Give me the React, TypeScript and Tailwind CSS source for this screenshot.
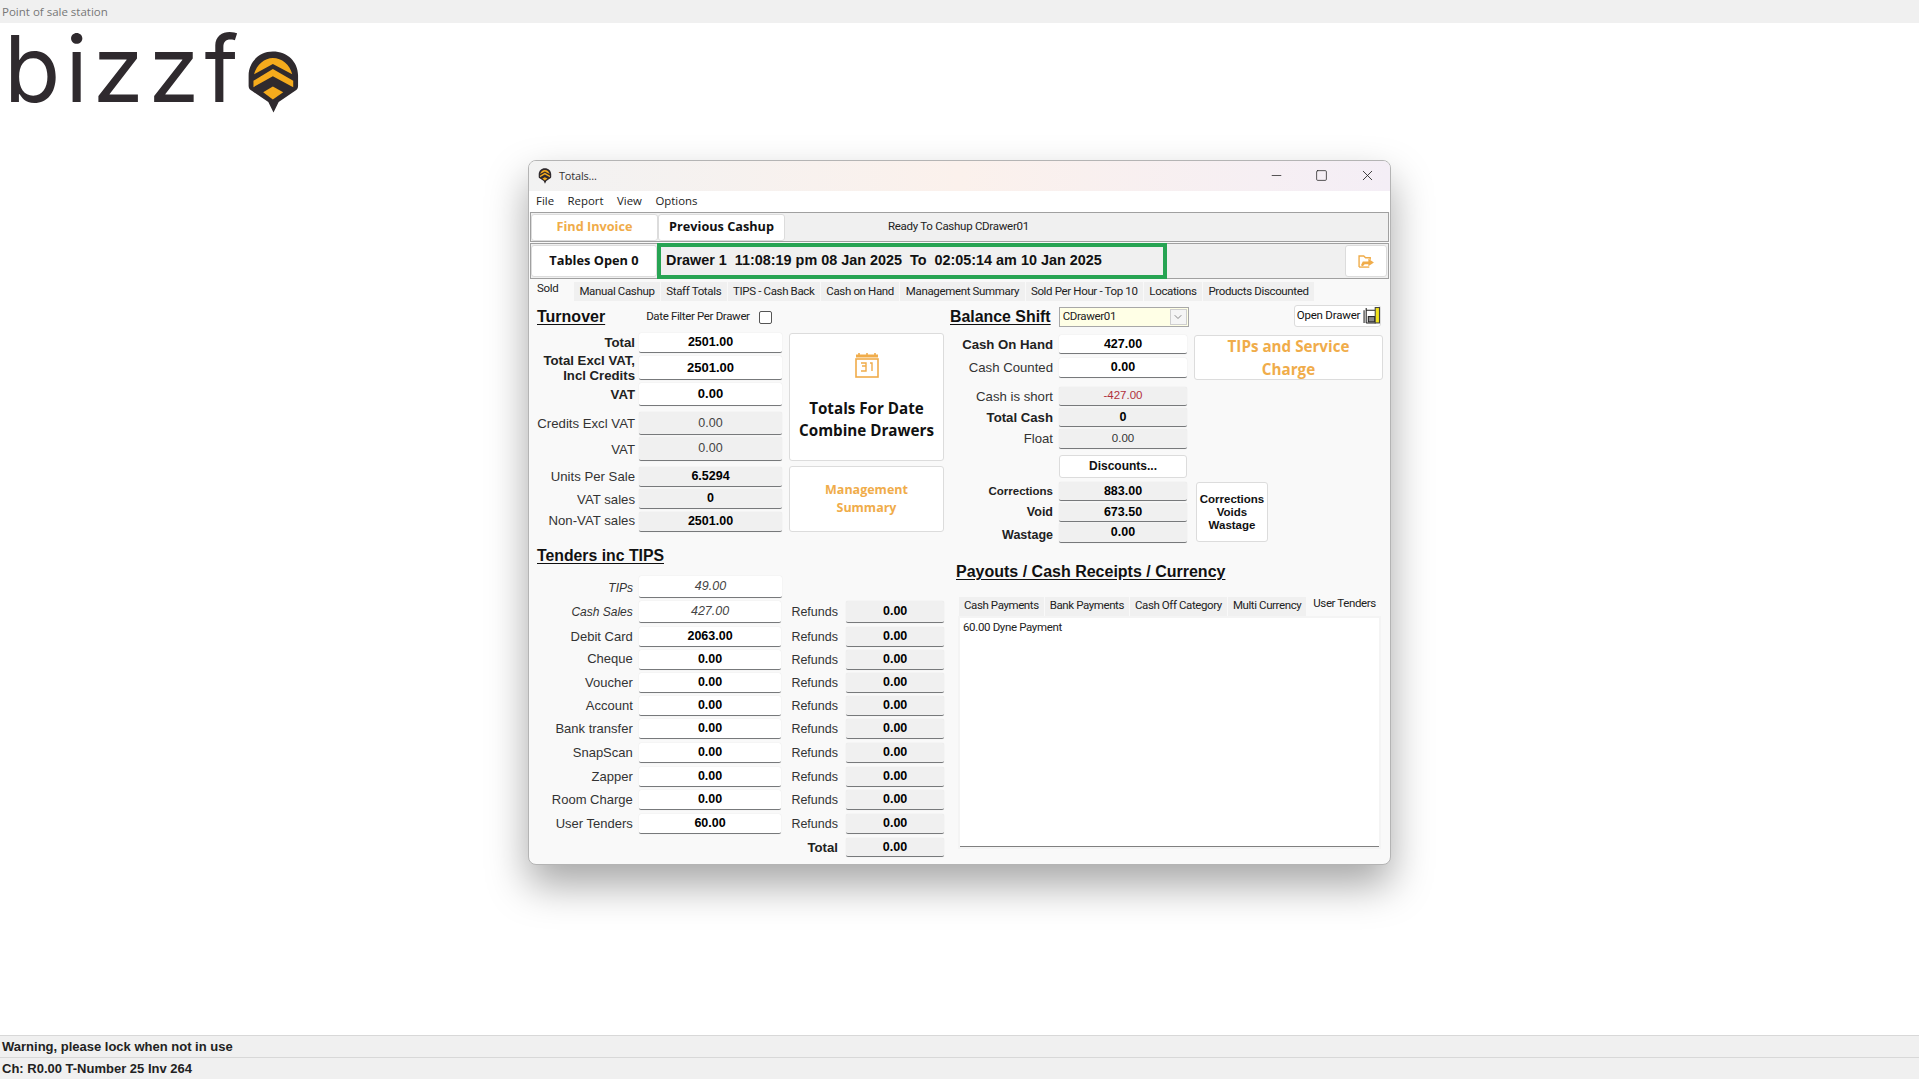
import React from 'react';
import { Minus, Square, X, ChevronDown } from 'lucide-react';

const FONT_ARIAL = { fontFamily: '"Liberation Sans", Arial, sans-serif' };
const FONT_UI = { fontFamily: '"Open Sans", sans-serif' };
const FONT_TAB = { fontFamily: 'Roboto, sans-serif' };

const BeeIcon = ({ className }: { className?: string }) => (
  <svg viewBox="20 26 164 196" className={className}>
    <path d="M100 30 C145 30 178 62 178 104 L178 136 Q178 146 168 152 L118 186 L102 218 L86 186 L36 152 Q25 146 25 136 L25 104 C25 62 58 30 100 30 Z" fill="#2f2a2e" />
    <path d="M42 100 C50 70 75 50 100 50 C128 50 152 70 160 100 L100 68 Z" fill="#f5ab1c" />
    <path d="M40 120 L100 84 L163 120 L163 140 L100 106 L40 140 Z" fill="#f5ab1c" />
    <path d="M70 156 L100 138 L132 156 L100 178 Z" fill="#f5ab1c" />
  </svg>
);

const CalendarIcon = () => (
  <svg viewBox="0 0 24 26" className="w-[24px] h-[26px]" fill="none" stroke="#f0ac4a" strokeWidth="1.6">
    <path d="M1 4h22" strokeWidth="3" />
    <path d="M4 1v2M12 1v2M20 1v2" strokeWidth="1.6" />
    <rect x="1" y="7" width="22" height="18" />
    <path d="M6 11h5v3H7M11 14v5H6M15 11h2v8" strokeWidth="1.4" />
  </svg>
);

const ShareIcon = () => (
  <svg viewBox="0 0 18 14" className="w-[17px] h-[13px]" fill="none">
    <path d="M1 13 V1 H6 L8 3 H13 V5" stroke="#f0ac4a" strokeWidth="1.5" />
    <path d="M1 13 H12" stroke="#f0ac4a" strokeWidth="1.5" />
    <path d="M3 11 L5 7 H11 V4 L17 8 L11 12 V10 H7 L5 12 Z" fill="#f0ac4a" />
  </svg>
);

const DrawerIcon = () => (
  <svg viewBox="0 0 16 16" className="w-[17px] h-[17px] shrink-0" fill="none">
    <path d="M1 3v12M3 1v14M3 3h9M3 15h9" stroke="#222" strokeWidth="1" />
    <rect x="5" y="9" width="6" height="5" fill="#8b8b8b" stroke="#222" strokeWidth="1" />
    <rect x="11.5" y="0.5" width="4" height="14.5" fill="#f2e31b" stroke="#444" strokeWidth="1" />
  </svg>
);

const Box = ({ value, className, textClass }: { value: string; className: string; textClass: string }) => (
  <div className={`flex items-center justify-center rounded-[2px] border-b-[1.5px] border-b-[#77797b] shadow-[0_0_1px_#d8d8d8] ${className} ${textClass}`}>
    {value}
  </div>
);

type Row = { label: string; value: string; rowClass: string; labelClass: string; boxClass: string; valueClass: string };

const LABEL_BOLD = 'font-bold text-[#222] text-[13.2px]';
const LABEL_PLAIN = 'text-[#333] text-[13.2px]';
const WHITE = 'bg-white';
const GRAY = 'bg-[#f0f0f0]';
const VAL_BOLD = 'font-bold text-black text-[12.5px]';
const VAL_PLAIN = 'text-[#444] text-[12.5px]';

const turnoverRows: Row[] = [
  { label: 'Total', value: '2501.00', rowClass: 'h-[20px]', labelClass: LABEL_BOLD + ' pb-[1px]', boxClass: WHITE, valueClass: VAL_BOLD },
  { label: 'Total Excl VAT,\nIncl Credits', value: '2501.00', rowClass: 'h-[24px] mt-[3px]', labelClass: LABEL_BOLD, boxClass: WHITE, valueClass: VAL_BOLD + ' text-[13px]' },
  { label: 'VAT', value: '0.00', rowClass: 'h-[23px] mt-[3px]', labelClass: LABEL_BOLD, boxClass: WHITE, valueClass: VAL_BOLD + ' text-[13px]' },
  { label: 'Credits Excl VAT', value: '0.00', rowClass: 'h-[23px] mt-[6px]', labelClass: LABEL_PLAIN + ' pb-[1px]', boxClass: GRAY, valueClass: VAL_PLAIN },
  { label: 'VAT', value: '0.00', rowClass: 'h-[24px] mt-[2px]', labelClass: LABEL_PLAIN, boxClass: GRAY, valueClass: VAL_PLAIN },
  { label: 'Units Per Sale', value: '6.5294', rowClass: 'h-[20px] mt-[6px]', labelClass: LABEL_PLAIN + ' pb-[1px]', boxClass: GRAY, valueClass: VAL_BOLD },
  { label: 'VAT sales', value: '0', rowClass: 'h-[20px] mt-[2px]', labelClass: LABEL_PLAIN, boxClass: GRAY, valueClass: VAL_BOLD },
  { label: 'Non-VAT sales', value: '2501.00', rowClass: 'h-[20px] mt-[3px]', labelClass: LABEL_PLAIN + ' pb-[4px]', boxClass: GRAY, valueClass: VAL_BOLD },
];

const tenderRows = [
  { label: 'TIPs', value: '49.00', mt: 'mt-0 h-[22px]', labelPad: 'pt-[2px]', italic: true, refund: false },
  { label: 'Cash Sales', value: '427.00', mt: 'mt-[3px] h-[22px]', labelPad: '', italic: true, refund: true },
  { label: 'Debit Card', value: '2063.00', mt: 'mt-[4px] h-[20px]', labelPad: 'pb-[1px]', italic: false, refund: true },
  { label: 'Cheque', value: '0.00', mt: 'mt-[3px] h-[20px]', labelPad: 'pb-[3px]', italic: false, refund: true },
  { label: 'Voucher', value: '0.00', mt: 'mt-[3px] h-[20px]', labelPad: '', italic: false, refund: true },
  { label: 'Account', value: '0.00', mt: 'mt-[3px] h-[20px]', labelPad: 'pb-[1px]', italic: false, refund: true },
  { label: 'Bank transfer', value: '0.00', mt: 'mt-[3px] h-[20px]', labelPad: '', italic: false, refund: true },
  { label: 'SnapScan', value: '0.00', mt: 'mt-[4px] h-[20px]', labelPad: 'pb-[1px]', italic: false, refund: true },
  { label: 'Zapper', value: '0.00', mt: 'mt-[4px] h-[20px]', labelPad: 'pb-[1px]', italic: false, refund: true },
  { label: 'Room Charge', value: '0.00', mt: 'mt-[3px] h-[20px]', labelPad: '', italic: false, refund: true },
  { label: 'User Tenders', value: '60.00', mt: 'mt-[4px] h-[20px]', labelPad: '', italic: false, refund: true },
];

const balanceRows = [
  { label: 'Cash is short', value: '-427.00', cls: 'h-[19px] mt-[9px]', labelClass: LABEL_PLAIN, valueClass: 'text-[#b0303c] text-[11.5px]' },
  { label: 'Total Cash', value: '0', cls: 'h-[19px] mt-[2px]', labelClass: LABEL_BOLD, valueClass: VAL_BOLD },
  { label: 'Float', value: '0.00', cls: 'h-[20px] mt-[2px]', labelClass: LABEL_PLAIN, valueClass: 'text-[#333] text-[11.5px]' },
];

const shrinkRows = [
  { label: 'Corrections', value: '883.00', cls: 'h-[19px]', labelClass: 'text-[11.5px]' },
  { label: 'Void', value: '673.50', cls: 'h-[19px] mt-[2px]', labelClass: 'text-[12.5px]' },
  { label: 'Wastage', value: '0.00', cls: 'h-[20px] mt-[1px]', labelClass: 'text-[12.5px] pt-[4px]' },
];

const mainTabs = ['Manual Cashup', 'Staff Totals', 'TIPS - Cash Back', 'Cash on Hand', 'Management Summary', 'Sold Per Hour - Top 10', 'Locations', 'Products Discounted'];
const subTabs = ['Cash Payments', 'Bank Payments', 'Cash Off Category', 'Multi Currency'];

const WhiteButton = ({ className, children }: { className: string; children: React.ReactNode }) => (
  <button className={`bg-white border border-[#dcdcdc] rounded-[3px] ${className}`}>{children}</button>
);

const Heading = ({ children, className }: { children: React.ReactNode; className: string }) => (
  <h2 className={`font-bold text-[#111] underline underline-offset-[2px] leading-none ${className}`}>{children}</h2>
);

export default function App() {
  return (
    <div className="h-screen bg-white flex flex-col overflow-hidden" style={FONT_ARIAL}>
      <div className="h-[23px] shrink-0 bg-[#f0f0f0] px-[2px] text-[11.5px] leading-[23px] text-[#777]" style={FONT_UI}>
        Point of sale station
      </div>

      <div className="h-[137px] shrink-0">
        <div className="flex items-start pl-[4px]">
          <span className="text-[92px] leading-[92px] font-normal text-[#2f2a2e] tracking-[0.055em]" style={{ fontFamily: 'Inter, sans-serif' }}>bizzf</span>
          <BeeIcon className="w-[53px] h-[64px] mt-[27px] ml-[3px]" />
        </div>
      </div>

      <div className="flex-1 min-h-0 pl-[528px]">
        <div className="w-[863px] h-[705px] bg-[#f9f9f9] border border-[#b4b4b4] rounded-[8px] shadow-[0_20px_40px_rgba(0,0,0,0.35)] flex flex-col overflow-hidden">
          {/* title bar */}
          <div className="h-[30px] shrink-0 flex items-center bg-gradient-to-r from-[#f2f2f2] via-[#fbf1ec] to-[#f4eef6] pl-[9px]">
            <BeeIcon className="w-[14px] h-[16px]" />
            <span className="ml-[7px] text-[11px] tracking-[-0.2px] text-[#333]" style={FONT_UI}>Totals...</span>
            <div className="ml-auto flex items-center gap-[31px] pr-[14px] pb-[1px] text-[#222]">
              <Minus className="w-[15px] h-[15px]" strokeWidth={1.2} />
              <Square className="w-[13px] h-[13px]" strokeWidth={1.4} />
              <X className="w-[17px] h-[17px]" strokeWidth={1.2} />
            </div>
          </div>

          {/* menu */}
          <div className="h-[21px] shrink-0 bg-white flex items-center gap-[13.5px] pl-[7px] pb-[1px] text-[11.4px] text-[#222]" style={FONT_UI}>
            <span>File</span>
            <span>Report</span>
            <span>View</span>
            <span>Options</span>
          </div>

          {/* toolbar */}
          <div className="h-[30px] shrink-0 bg-[#f0f0f0] border border-[#a0a0a0] flex items-center mx-[1px]">
            <WhiteButton className="w-[127px] h-[27px] text-[12.7px] font-bold text-[#f0ac4a]"><span style={FONT_UI}>Find Invoice</span></WhiteButton>
            <WhiteButton className="w-[127px] h-[27px] text-[12.7px] font-bold text-[#111]"><span style={FONT_UI}>Previous Cashup</span></WhiteButton>
            <span className="ml-[103px] text-[11.5px] tracking-[-0.28px] text-[#222]" style={FONT_TAB}>Ready To Cashup CDrawer01</span>
          </div>

          {/* drawer row */}
          <div className="h-[36px] shrink-0 bg-[#f0f0f0] border border-[#a0a0a0] flex items-stretch mx-[1px] mt-[1px]">
            <WhiteButton className="w-[126px] my-[1px] text-[12.8px] font-bold text-[#111]"><span style={FONT_UI}>Tables Open 0</span></WhiteButton>
            <div className="w-[510px] -my-[1px] border-[4px] border-[#27a453] flex items-center pl-[5px] pb-[1px] text-[14.4px] font-bold text-[#111] whitespace-pre">
              Drawer 1  11:08:19 pm 08 Jan 2025  To  02:05:14 am 10 Jan 2025
            </div>
            <WhiteButton className="ml-auto w-[42px] my-[1px] mr-[1px] flex items-center justify-center"><ShareIcon /></WhiteButton>
          </div>

          {/* main tabs */}
          <div className="h-[22px] shrink-0 flex items-end pl-[1px] text-[11.5px] tracking-[-0.35px] text-[#222]" style={FONT_TAB}>
            <div className="h-[22px] w-[43px] bg-[#f9f9f9] pl-[7px] pb-[3px] flex items-center">Sold</div>
            {mainTabs.map((tab) => (
              <div key={tab} className="h-[19px] bg-[#f0f0f0] border-l border-[#f9f9f9] px-[5.4px] flex items-center whitespace-nowrap">{tab}</div>
            ))}
          </div>

          {/* body */}
          <div className="flex-1 min-h-0 flex pl-[8px]">
            {/* left column */}
            <div className="w-[407px] shrink-0">
              <div className="h-[32px] flex items-center">
                <Heading className="text-[16px]">Turnover</Heading>
                <span className="ml-[41px] text-[11.5px] tracking-[-0.35px] text-[#222]" style={FONT_TAB}>Date Filter Per Drawer</span>
                <span className="ml-[9px] w-[13px] h-[13px] border border-[#555] rounded-[2px] bg-white" />
              </div>

              <div className="flex">
                <div className="w-[245px]">
                  {turnoverRows.map((row) => (
                    <div key={row.label + row.value + row.rowClass} className={`flex items-center ${row.rowClass}`}>
                      <div className={`w-[98px] text-right leading-[15px] whitespace-pre-line ${row.labelClass}`}>{row.label}</div>
                      <Box value={row.value} className={`ml-[4px] w-[143px] h-full ${row.boxClass}`} textClass={row.valueClass} />
                    </div>
                  ))}
                </div>
                <div className="ml-[7px] w-[155px] flex flex-col">
                  <WhiteButton className="h-[128px] flex flex-col items-center justify-start pt-[18px]">
                    <CalendarIcon />
                    <span className="mt-[19px] text-[15.2px] font-bold leading-[22px] text-[#111]" style={FONT_UI}>
                      Totals For Date<br />Combine Drawers
                    </span>
                  </WhiteButton>
                  <WhiteButton className="mt-[5px] h-[66px] text-[12.5px] font-bold leading-[18px] text-[#f0ac4a]">
                    <span style={FONT_UI}>Management<br />Summary</span>
                  </WhiteButton>
                </div>
              </div>

              <div className="h-[44px] flex items-end pb-[12px]">
                <Heading className="text-[15.8px]">Tenders inc TIPS</Heading>
              </div>

              {tenderRows.map((row) => (
                <div key={row.label} className={`flex items-center ${row.mt}`}>
                  <div className={`w-[96px] text-right text-[#333] ${row.labelPad} ${row.italic ? 'italic text-[12px]' : 'text-[13px]'}`}>{row.label}</div>
                  <Box
                    value={row.value}
                    className={`ml-[6px] w-[143px] h-full ${WHITE}`}
                    textClass={row.italic ? 'italic text-[#444] text-[12.5px]' : VAL_BOLD}
                  />
                  {row.refund && (
                    <>
                      <div className="ml-[10px] w-[47px] text-[12.5px] text-[#333]">Refunds</div>
                      <Box value="0.00" className={`ml-[8px] w-[98px] h-full ${GRAY}`} textClass={VAL_BOLD} />
                    </>
                  )}
                </div>
              ))}
              <div className="mt-[4px] h-[19px] flex items-center">
                <div className="ml-[245px] w-[64px] text-right pr-[8px] text-[13.2px] font-bold text-[#222]">Total</div>
                <Box value="0.00" className={`w-[98px] h-full ${GRAY}`} textClass={VAL_BOLD} />
              </div>
            </div>

            {/* right column */}
            <div className="ml-[6px] w-[433px] shrink-0">
              <div className="h-[32px] flex items-center">
                <Heading className="text-[15.9px]">Balance Shift</Heading>
                <div className="ml-[8px] w-[130px] h-[20px] border border-[#a8a8a8] bg-[#ffffe6] flex items-center justify-between text-[11.5px] tracking-[-0.35px] text-[#222] pl-[3px] pr-[1px]" style={FONT_TAB}>
                  CDrawer01
                  <span className="w-[17px] h-[16px] bg-[#f5f5f5] border border-[#cfcfcf] flex items-center justify-center">
                    <ChevronDown className="w-[12px] h-[12px] text-[#888]" />
                  </span>
                </div>
                <WhiteButton className="ml-[105px] w-[87px] h-[22px] -mt-[3px] flex items-center pl-[2px] gap-[3px] text-[11.5px] tracking-[-0.2px] text-[#111] whitespace-nowrap">
                  <span style={FONT_TAB}>Open Drawer</span>
                  <DrawerIcon />
                </WhiteButton>
              </div>

              <div className="flex mt-[2px]">
                <div className="w-[237px]">
                  <div className="flex items-center h-[19px]">
                    <div className="w-[103px] text-right text-[13.2px] font-bold text-[#222] whitespace-nowrap">Cash On Hand</div>
                    <Box value="427.00" className={`ml-[6px] w-[128px] h-full ${WHITE}`} textClass={VAL_BOLD} />
                  </div>
                  <div className="flex items-center h-[20px] mt-[4px]">
                    <div className="w-[103px] text-right text-[13.2px] text-[#333] whitespace-nowrap">Cash Counted</div>
                    <Box value="0.00" className={`ml-[6px] w-[128px] h-full ${WHITE}`} textClass={VAL_BOLD} />
                  </div>
                  {balanceRows.map((row) => (
                    <div key={row.label} className={`flex items-center ${row.cls}`}>
                      <div className={`w-[103px] text-right ${row.labelClass}`}>{row.label}</div>
                      <Box value={row.value} className={`ml-[6px] w-[128px] h-full ${GRAY}`} textClass={row.valueClass} />
                    </div>
                  ))}
                </div>
                <WhiteButton className="ml-[7px] w-[189px] h-[45px] text-[15.2px] leading-[22px] font-bold text-[#f0ac4a]">
                  <span className="relative -top-[1px]" style={FONT_UI}>TIPs and Service<br />Charge</span>
                </WhiteButton>
              </div>

              <div className="ml-[109px] mt-[4px] w-[128px] h-[23px]">
                <WhiteButton className="w-full h-full text-[12px] font-bold text-[#111]">Discounts...</WhiteButton>
              </div>

              <div className="flex mt-[6px]">
                <div className="w-[237px]">
                  {shrinkRows.map((row) => (
                    <div key={row.label} className={`flex items-center ${row.cls}`}>
                      <div className={`w-[103px] text-right font-bold text-[#222] ${row.labelClass}`}>{row.label}</div>
                      <Box value={row.value} className={`ml-[6px] w-[128px] h-full ${GRAY}`} textClass={VAL_BOLD} />
                    </div>
                  ))}
                </div>
                <WhiteButton className="ml-[9px] w-[72px] h-[60px] text-[11.5px] leading-[13px] font-bold text-[#111]">
                  Corrections<br />Voids<br />Wastage
                </WhiteButton>
              </div>

              <Heading className="mt-[21px] ml-[6px] text-[16px]">Payouts / Cash Receipts / Currency</Heading>

              <div className="mt-[14px] ml-[7px] w-[425px] h-[253px] flex flex-col">
                <div className="h-[24px] shrink-0 flex items-end pl-[2px] text-[11.5px] tracking-[-0.4px] text-[#222]" style={FONT_TAB}>
                  {subTabs.map((tab) => (
                    <div key={tab} className="h-[21px] bg-[#f0f0f0] border-r border-[#f9f9f9] px-[5px] pb-[3px] flex items-center whitespace-nowrap">{tab}</div>
                  ))}
                  <div className="h-[24px] px-[6px] pb-[5px] flex items-center whitespace-nowrap">User Tenders</div>
                </div>
                <div className="flex-1 mx-[3px] bg-white border-b border-b-[#808080] shadow-[0_0_0_2px_#f4f4f4] pl-[3px] pt-[1px] text-[11.5px] tracking-[-0.35px] text-[#222]" style={FONT_TAB}>
                  60.00 Dyne Payment
                </div>
              </div>
            </div>
          </div>
        </div>
      </div>

      <div className="h-[44px] shrink-0 bg-[#f0f0f0] text-[13px] font-bold text-[#222]">
        <div className="h-[22px] border-t border-[#d8d8d8] pl-[2px] leading-[22px]">Warning, please lock when not in use</div>
        <div className="h-[22px] border-t border-[#d8d8d8] pl-[2px] leading-[21px]">Ch: R0.00 T-Number 25 Inv 264</div>
      </div>
    </div>
  );
}
